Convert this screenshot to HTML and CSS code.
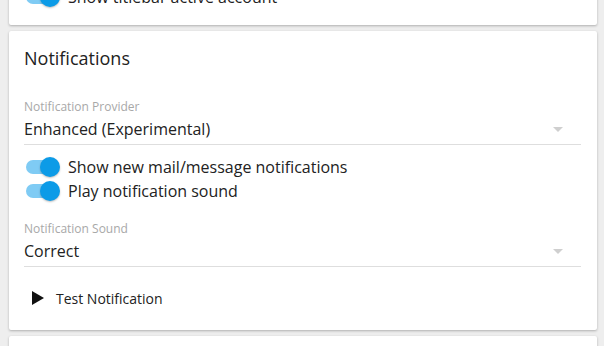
FILE: index.html
```html
<!DOCTYPE html>
<html>
<head>
<meta charset="utf-8">
<link rel="stylesheet" href="styles.css">
</head>
<body>
<div class="page">
  <div class="card card-top">
    <div class="toggle-row">
      <span class="toggle"><span class="track"></span><span class="thumb"></span></span>
      <span class="toggle-label">Show titlebar active account</span>
    </div>
  </div>
  <div class="card card-main">
    <div class="card-title">Notifications</div>
    <div class="field field-first">
      <div class="field-label">Notification Provider</div>
      <div class="field-value"><span>Enhanced (Experimental)</span><span class="arrow"></span></div>
    </div>
    <div class="toggles">
      <div class="toggle-row">
        <span class="toggle"><span class="track"></span><span class="thumb"></span></span>
        <span class="toggle-label">Show new mail/message notifications</span>
      </div>
      <div class="toggle-row">
        <span class="toggle"><span class="track"></span><span class="thumb"></span></span>
        <span class="toggle-label">Play notification sound</span>
      </div>
    </div>
    <div class="field field-second">
      <div class="field-label">Notification Sound</div>
      <div class="field-value"><span>Correct</span><span class="arrow"></span></div>
    </div>
    <div class="button-row">
      <svg class="play" width="12" height="14" viewBox="0 0 12 14"><path d="M0 0 L12 7 L0 14 Z" fill="#111"/></svg>
      <span class="button-label">Test Notification</span>
    </div>
  </div>
  <div class="card card-bottom"></div>
</div>
</body>
</html>
```
FILE: styles.css
```css
html, body {
  margin: 0;
  padding: 0;
  background: #eeeeee;
  font-family: "Open Sans", "Liberation Sans", sans-serif;
  color: #222;
  overflow: hidden;
  height: 346px;
}
.page {
  display: flex;
  flex-direction: column;
  gap: 6px;
  padding: 0 7px 0 9px;
  margin-top: -40px;
}
.card {
  background: #fff;
  border-radius: 2px;
  box-shadow: 0 1px 3px rgba(0,0,0,0.18), 0 1px 2px rgba(0,0,0,0.10);
  padding: 0 16px 0 15px;
}
.card-top {
  height: 65px;
  display: flex;
  align-items: flex-end;
  box-sizing: border-box;
}
.card-top .toggle-row {
  margin-bottom: 16px;
}
.card-main {
  padding-top: 15px;
  padding-bottom: 14px;
}
.card-bottom {
  height: 20px;
}
.card-title {
  font-size: 18px;
  line-height: 24px;
  color: #222;
}
.field-first {
  margin-top: 29px;
}
.field-second {
  margin-top: 18px;
}
.field-label {
  font-size: 12px;
  line-height: 16px;
  color: #a8a8a8;
}
.field-value {
  font-size: 16px;
  line-height: 24px;
  padding-top: 2px;
  padding-bottom: 3px;
  border-bottom: 1px solid #dedede;
  display: flex;
  justify-content: space-between;
  align-items: center;
}
.arrow {
  width: 0;
  height: 0;
  border-left: 5px solid transparent;
  border-right: 5px solid transparent;
  border-top: 5px solid #cfcfcf;
  margin-right: 18px;
}
.toggles {
  margin-top: 10px;
  display: flex;
  flex-direction: column;
}
.toggle-row {
  display: flex;
  align-items: center;
  height: 24px;
}
.toggle {
  position: relative;
  width: 36px;
  height: 20px;
  margin-left: 1px;
  margin-right: 7px;
}
.track {
  position: absolute;
  left: 1px;
  top: 3px;
  width: 32px;
  height: 14px;
  border-radius: 7px;
  background: #7fcbf4;
}
.thumb {
  position: absolute;
  left: 15px;
  top: 0;
  width: 20px;
  height: 20px;
  border-radius: 50%;
  background: #0c9be7;
  box-shadow: 0 1px 2px rgba(0,0,0,0.25);
}
.toggle-label {
  font-size: 16px;
  color: #222;
}
.button-row {
  display: flex;
  align-items: center;
  height: 36px;
  margin-top: 13px;
  padding-left: 8px;
}
.play {
  margin-right: 12px;
}
.button-label {
  font-size: 14px;
  color: #222;
}
```
